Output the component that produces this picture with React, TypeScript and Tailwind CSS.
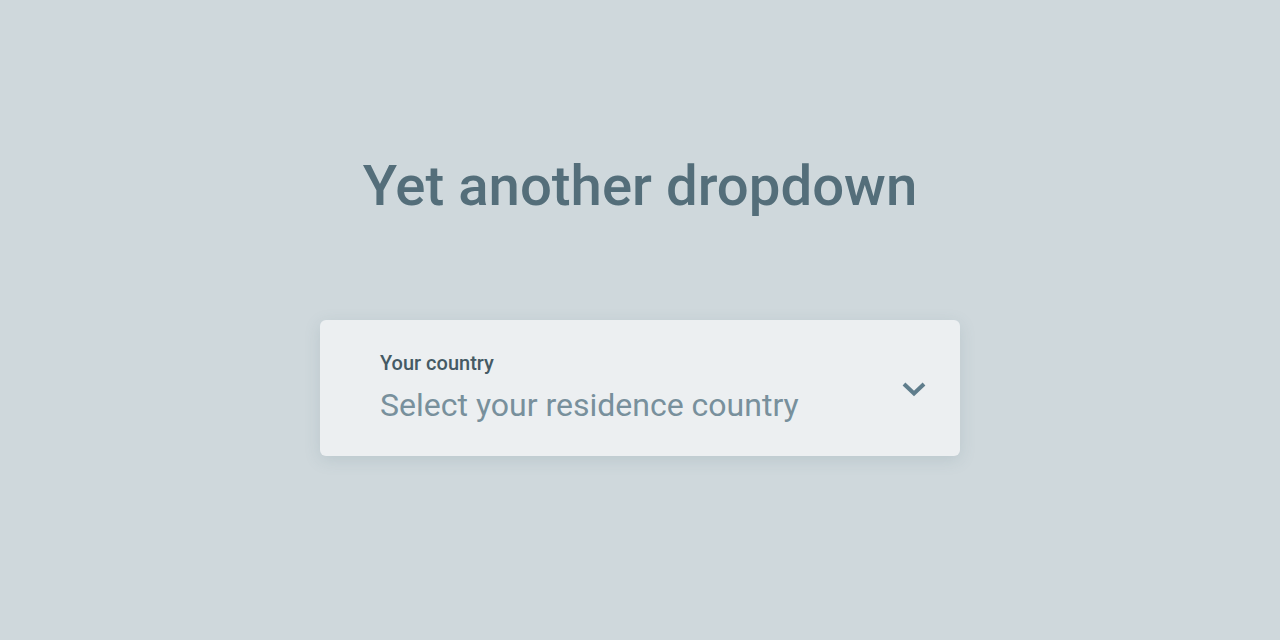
import { useState } from "react";

export default function App() {
  const [open, setOpen] = useState(false);

  return (
    <div className="flex min-h-screen flex-col items-center bg-[#cfd8dc] pt-[153px] font-['Roboto',sans-serif]">
      <h1 className="text-[56.3px] font-medium leading-[67px] text-[#546e7a]">Yet another dropdown</h1>

      <button
        type="button"
        onClick={() => setOpen(!open)}
        className="mt-[100px] flex w-[640px] items-center justify-between rounded-[6px] bg-[#eceff1] pt-[31px] pb-[31px] pl-[60px] pr-[34px] text-left shadow-[0_4px_16px_rgba(96,125,139,0.18)]"
      >
        <div className="flex flex-col">
          <span className="text-[20px] font-medium leading-6 text-[#455a64]">Your country</span>
          <span className="mt-[10px] text-[32px] leading-10 text-[#78909c]">Select your residence country</span>
        </div>
        <svg width="24" height="16" viewBox="0 0 24 16" className="mt-[2px]">
          <path d="M2 3 L12 12.5 L22 3" fill="none" stroke="#5f7d8c" strokeWidth="4" />
        </svg>
      </button>
    </div>
  );
}
